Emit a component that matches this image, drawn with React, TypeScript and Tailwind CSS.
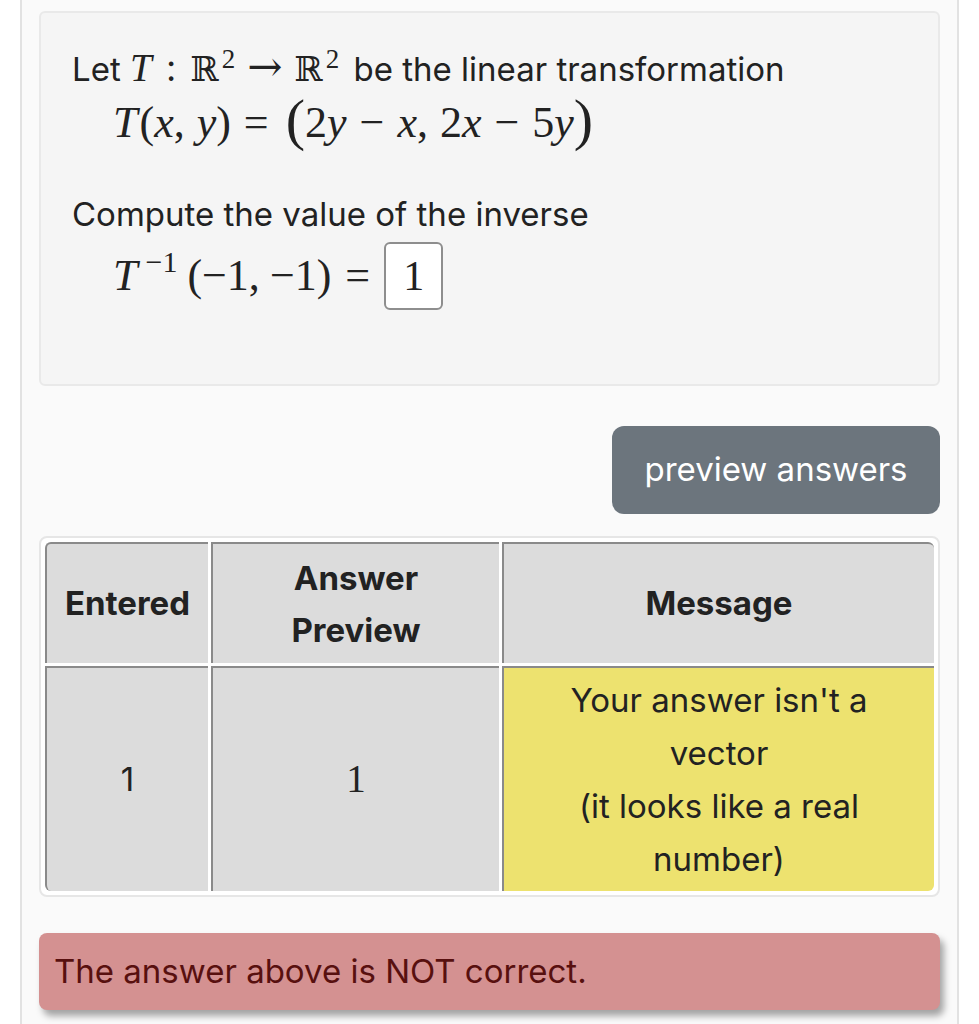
import React from 'react';

const sans = { fontFamily: 'Inter, "Noto Sans", sans-serif' };

type P = { children: React.ReactNode; className?: string };

// math glyphs in a serif face, close enough to KaTeX
const M = ({ children, className = '' }: P) => (
  <span className={`font-['Liberation_Serif',serif] italic ${className}`}>{children}</span>
);
const R = ({ children, className = '' }: P) => (
  <span className={`font-['Liberation_Serif',serif] not-italic ${className}`}>{children}</span>
);
const BB = () => <span className="font-['DejaVu_Serif',serif] not-italic text-[34px]">ℝ</span>;
const Sq = ({ className = '' }: { className?: string }) => (
  <sup className={`ml-[3px] font-['Liberation_Serif',serif] text-[27px] ${className}`}>2</sup>
);

const ProblemBox = () => (
  <div className="h-[375px] rounded-md border-2 border-[#e9e9e9] bg-[#f5f5f5] px-[31px] pt-[30px] text-[33px] text-[#222] leading-[48px]">
    <div>
      Let <span className="text-[39px]"><M>T</M></span>
      <span className="text-[39px]"><R className="mx-[14px]">:</R></span>
      <BB />
      <Sq />
      <span className="mx-[12px] font-['DejaVu_Serif',serif] text-[42px] leading-none">→</span>
      <BB />
      <Sq className="mr-[5px]" /> be the linear transformation
    </div>
    <div className="pl-[41px] pt-[4px] text-[44px] leading-[52px] flex items-center">
      <M>T</M>
      <R className="ml-[2px]">(</R>
      <M>x</M>
      <R>,</R>
      <M className="ml-[12px]">y</M>
      <R>)</R>
      <R className="mx-[13px]">=</R>
      <span className="font-['Liberation_Serif',serif] text-[58px] leading-none -mt-[6px] ml-[4px]">(</span>
      <R>2</R>
      <M>y</M>
      <R className="mx-[13px]">−</R>
      <M>x</M>
      <R>,</R>
      <R className="ml-[12px]">2</R>
      <M>x</M>
      <R className="mx-[13px]">−</R>
      <R>5</R>
      <M>y</M>
      <span className="font-['Liberation_Serif',serif] text-[58px] leading-none -mt-[6px]">)</span>
    </div>
    <div className="pt-[41px]">Compute the value of the inverse</div>
    <div className="pl-[41px] pt-[4px] flex items-center text-[44px]">
      <M>T</M>
      <span className="ml-[8px] -mt-[28px] font-['Liberation_Serif',serif] text-[30px]">−1</span>
      <R className="ml-[10px]">(−1,</R>
      <R className="ml-[10px]">−1)</R>
      <R className="mx-[14px]">=</R>
      <span className="flex h-[68px] w-[59px] items-center justify-center rounded-md border-2 border-[#8e8e8e] bg-white font-['Liberation_Serif',serif] text-[42px]">
        1
      </span>
    </div>
  </div>
);

const AnswerTable = () => (
  <div className="mt-[22px] rounded-lg border-2 border-[#e6e6e6] bg-white p-[1px]">
    <table className="w-full border-separate border-spacing-[3px] text-[33px] text-[#222]">
      <thead>
        <tr className="h-[121px]">
          <th className="w-[163px] rounded-tl-md border-l-2 border-t-2 border-[#8a8a8a] bg-[#dcdcdc] font-bold">Entered</th>
          <th className="w-[288px] border-l-2 border-t-2 border-[#8a8a8a] bg-[#dcdcdc] font-bold leading-[52px]">
            Answer
            <br />
            Preview
          </th>
          <th className="rounded-tr-md border-l-2 border-t-2 border-[#8a8a8a] bg-[#dcdcdc] font-bold">Message</th>
        </tr>
      </thead>
      <tbody>
        <tr className="h-[225px]">
          <td className="rounded-bl-md border-l-2 border-t-2 border-[#8a8a8a] bg-[#dcdcdc] text-center">1</td>
          <td className="border-l-2 border-t-2 border-[#8a8a8a] bg-[#dcdcdc] text-center font-['Liberation_Serif',serif] text-[39px]">1</td>
          <td className="rounded-br-md border-l-2 border-t-2 border-[#8a8a8a] bg-[#ede26f] text-center leading-[53px]">
            Your answer isn't a
            <br />
            vector
            <br />
            (it looks like a real
            <br />
            number)
          </td>
        </tr>
      </tbody>
    </table>
  </div>
);

export default function App() {
  return (
    <div className="min-h-screen bg-white" style={sans}>
      <div className="mx-[20px] min-h-[1024px] border-x-2 border-[#e2e2e2] bg-[#fafafa] px-[17px] pt-[11px]">
        <ProblemBox />

        <div className="mt-[40px] flex justify-end">
          <button className="h-[88px] w-[328px] rounded-xl bg-[#6c757d] text-[33px] text-white">
            preview answers
          </button>
        </div>

        <AnswerTable />

        <div className="mt-[36px] flex h-[77px] items-center rounded-lg bg-[#d49191] px-[15px] text-[33px] text-[#58100f] shadow-[4px_6px_7px_rgba(0,0,0,0.35)]">
          The answer above is NOT correct.
        </div>
      </div>
    </div>
  );
}
